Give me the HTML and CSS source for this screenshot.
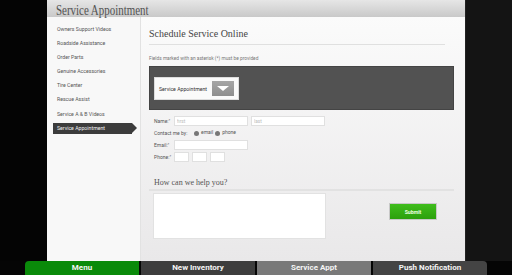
FILE: index.html
```html
<!DOCTYPE html>
<html lang="en">
<head>
<meta charset="UTF-8">
<meta name="viewport" content="width=device-width, initial-scale=1.0">
<title>Service Appointment</title>
<link rel="stylesheet" href="styles.css">
</head>
<body>

<div class="screen">
    <div class="gutter gutter-left"></div>

    <div class="panel">
        <div class="panel-header"><span class="panel-title">Service Appointment</span></div>

        <div class="panel-body">
            <!-- Левое меню -->
            <ul class="side-menu">
                <li>Owners Support Videos</li>
                <li>Roadside Assistance</li>
                <li>Order Parts</li>
                <li>Genuine Accessories</li>
                <li>Tire Center</li>
                <li>Rescue Assist</li>
                <li>Service A &amp; B Videos</li>
                <li class="active">Service Appointment</li>
            </ul>

            <!-- Форма -->
            <div class="content">
                <h2 class="content-title">Schedule Service Online</h2>
                <p class="note">Fields marked with an asterisk (*) must be provided</p>

                <div class="select-box">
                    <div class="select">
                        <span>Service Appointment</span>
                        <span class="select-btn"><span class="caret"></span></span>
                    </div>
                </div>

                <div class="form">
                    <div class="row">
                        <label class="label">Name:<sup>*</sup></label>
                        <input type="text" class="field field-name" placeholder="first">
                        <input type="text" class="field field-name" placeholder="last">
                    </div>
                    <div class="row row-contact">
                        <span class="label-wide">Contact me by:</span>
                        <span class="radio"></span><span class="radio-text">email</span>
                        <span class="radio"></span><span class="radio-text">phone</span>
                    </div>
                    <div class="row">
                        <label class="label">Email:<sup>*</sup></label>
                        <input type="text" class="field field-name">
                    </div>
                    <div class="row">
                        <label class="label">Phone:<sup>*</sup></label>
                        <input type="text" class="field field-phone">
                        <input type="text" class="field field-phone">
                        <input type="text" class="field field-phone">
                    </div>
                </div>

                <h3 class="help-title">How can we help you?</h3>

                <div class="help-row">
                    <textarea class="help-text"></textarea>
                    <button type="button" class="submit-btn">Submit</button>
                </div>
            </div>
        </div>
    </div>

    <div class="gutter gutter-right"></div>
</div>

<!-- Нижняя панель вкладок -->
<div class="tabs">
    <div class="tab tab-menu">Menu</div>
    <div class="tab">New Inventory</div>
    <div class="tab tab-current">Service Appt</div>
    <div class="tab tab-last">Push Notification</div>
</div>

</body>
</html>
```

FILE: styles.css
```css
body {
    margin: 0;
    width: 512px;
    height: 275px;
    overflow: hidden;
    background-color: #050505;
    font-family: Roboto, "Liberation Sans", sans-serif;
}

.screen {
    display: flex;
    height: 261px;
}

.gutter {
    width: 47px;
}

.gutter-left {
    background-color: #040404;
}

.gutter-right {
    width: 46px;
    background-color: #141414;
    border-left: 1px solid #222;
}

.panel {
    width: 418px;
    display: flex;
    flex-direction: column;
    background-color: #f8f8f8;
}

.panel-header {
    height: 17px;
    padding-left: 9px;
    background: linear-gradient(#e6e6e6, #c9c9c9);
    white-space: nowrap;
}

.panel-title {
    display: inline-block;
    font-family: "Liberation Serif", serif;
    font-size: 14px;
    line-height: 17px;
    color: #525252;
    transform: scaleX(0.78);
    transform-origin: left center;
}

.panel-body {
    flex: 1;
    display: flex;
}

/* Левое меню */
.side-menu {
    width: 94px;
    margin: 0;
    padding: 7px 0 0 6px;
    list-style: none;
    box-sizing: border-box;
    border-right: 1px solid #e2e2e2;
}

.side-menu li {
    height: 11px;
    margin-bottom: 3.1px;
    padding-left: 4px;
    font-size: 5.2px;
    line-height: 11px;
    color: #555;
    white-space: nowrap;
}

.side-menu li.active {
    position: relative;
    width: 79px;
    background-color: #3c3c3c;
    color: #f2f2f2;
    box-sizing: border-box;
}

.side-menu li.active::after {
    content: "";
    position: absolute;
    right: -5px;
    top: 0;
    border-left: 5px solid #3c3c3c;
    border-top: 5.5px solid transparent;
    border-bottom: 5.5px solid transparent;
}

/* Содержимое */
.content {
    flex: 1;
    padding: 0 10px 0 8px;
    background: linear-gradient(#fbfbfb, #e9e8e9);
}

.content-title {
    margin: 0;
    padding-top: 11px;
    padding-bottom: 4px;
    width: 296px;
    border-bottom: 1px solid #e0e0e0;
    font-family: "Liberation Serif", serif;
    font-weight: normal;
    font-size: 10px;
    line-height: 12px;
    color: #444;
}

.note {
    margin: 11px 0 0 0;
    font-size: 4.8px;
    line-height: 6px;
    color: #777;
}

.select-box {
    margin-top: 4px;
    width: 305px;
    height: 44px;
    box-sizing: border-box;
    padding: 10px 0 0 4px;
    background-color: #525252;
    border: 1px solid #444;
}

.select {
    width: 85px;
    height: 23px;
    box-sizing: border-box;
    padding: 0 4px 0 4px;
    display: flex;
    align-items: center;
    justify-content: space-between;
    background-color: #fafafa;
    border: 1px solid #ddd;
    font-size: 5.2px;
    color: #333;
}

.select-btn {
    width: 22px;
    height: 15px;
    display: flex;
    align-items: center;
    justify-content: center;
    background: linear-gradient(#a6a6a6, #8e8e8e);
}

.caret {
    border-top: 5px solid #fff;
    border-left: 6px solid transparent;
    border-right: 6px solid transparent;
}

.form {
    margin-top: 5px;
    padding-left: 5px;
}

.row {
    display: flex;
    align-items: center;
    height: 12px;
    font-size: 5px;
    color: #555;
}

.row-contact {
    height: 11px;
    margin-bottom: 1px;
}

.label {
    width: 20px;
}

.label sup {
    font-size: 4px;
    vertical-align: 1px;
}

.label-wide {
    width: 40px;
}

.field {
    height: 10px;
    margin: 0 3px 0 0;
    padding: 0 0 0 2px;
    box-sizing: border-box;
    background-color: #fff;
    border: 1px solid #e0e0e0;
    font-family: Roboto, "Liberation Sans", sans-serif;
    font-size: 4.8px;
    color: #555;
}

.field::placeholder {
    color: #bbb;
}

.field-name {
    width: 74px;
}

.field-phone {
    width: 15px;
}

.radio {
    width: 5px;
    height: 5px;
    margin: 2px 2px 0 0;
    border-radius: 50%;
    background-color: #777;
}

.radio-text {
    margin-right: 2px;
    padding-bottom: 2px;
}

.help-title {
    margin: 15px 0 0 0;
    padding: 0 0 1px 5px;
    width: 300px;
    border-bottom: 2px solid #e2e2e2;
    font-family: "Liberation Serif", serif;
    font-weight: normal;
    font-size: 8px;
    line-height: 10px;
    color: #555;
}

.help-row {
    display: flex;
    align-items: flex-start;
    margin-top: 2px;
    padding-left: 4px;
}

.help-text {
    width: 173px;
    height: 46px;
    margin: 0;
    padding: 0;
    box-sizing: border-box;
    background-color: #fff;
    border: 1px solid #e2e2e2;
    resize: none;
}

.submit-btn {
    width: 48px;
    height: 17px;
    margin: 10px 0 0 63px;
    padding: 0;
    background: linear-gradient(#3fbd1c, #2ca00c);
    border: 1px solid #c8c8c8;
    color: #eaffe0;
    font-family: Roboto, "Liberation Sans", sans-serif;
    font-weight: bold;
    font-size: 5.2px;
    cursor: pointer;
}

/* Вкладки */
.tabs {
    display: flex;
    gap: 2px;
    height: 14px;
    padding-left: 25px;
    background-color: #050505;
}

.tab {
    width: 114px;
    background-color: #3d3d3d;
    color: #f4f4f4;
    font-weight: bold;
    font-size: 8px;
    line-height: 14px;
    text-align: center;
}

.tab-menu {
    background-color: #0a8a0a;
    border-top-left-radius: 4px;
}

.tab-current {
    background-color: #797979;
}

.tab-last {
    background-color: #444;
    border-top-right-radius: 4px;
}
```
